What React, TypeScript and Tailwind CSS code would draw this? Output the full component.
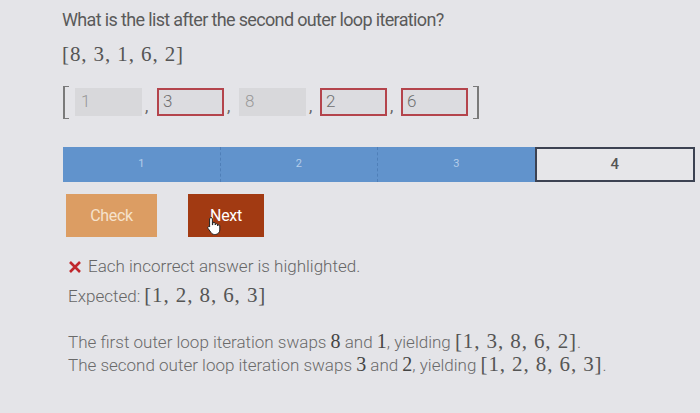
const sans = "font-[family-name:Roboto,sans-serif]";
const serif = "font-[family-name:'Liberation_Serif',serif]";
const mathList = serif + " text-[21px] text-[#555] tracking-[0.9px]";

function Box({ v, wrong }: { v: string; wrong?: boolean }) {
  return (
    <div
      className={
        "w-[67px] h-[28px] flex items-center pl-[4px] text-[17px] font-light " +
        (wrong
          ? "border-2 border-[#b4444c] bg-[#dcdce0] text-[#6e6e6e]"
          : "border-2 border-[#d8d8db] bg-[#d8d8db] text-[#999]")
      }
    >
      {v}
    </div>
  );
}

function Comma() {
  return <div className="w-[14px] h-[28px] flex items-end pl-[3px] pb-[1px] text-[17px] text-[#666] leading-none">,</div>;
}

function M({ children }: { children: React.ReactNode }) {
  return <span className={serif + " text-[20px] text-[#444]"}>{children}</span>;
}

export default function App() {
  return (
    <div className={"w-[700px] h-[413px] bg-[#e4e4e8] overflow-hidden pl-[62px] pt-[8px] " + sans}>
      <div className="text-[18px] text-[#5a5a5a] leading-[24px] tracking-[-0.65px]">
        What is the list after the second outer loop iteration?
      </div>
      <div className={mathList + " mt-[8px] leading-[28px]"}>[8, 3, 1, 6, 2]</div>

      <div className="mt-[18px] flex items-center h-[32px]">
        <div className="w-[6px] h-[33px] border-l-2 border-t border-b border-[#7a7a7a] ml-[1px]" />
        <div className="w-[6px]" />
        <Box v="1" />
        <Comma />
        <div className="w-[1px]" />
        <Box v="3" wrong />
        <Comma />
        <div className="w-[1px]" />
        <Box v="8" />
        <Comma />
        <Box v="2" wrong />
        <Comma />
        <Box v="6" wrong />
        <div className="w-[5px]" />
        <div className="w-[6px] h-[33px] border-r-2 border-t border-b border-[#7a7a7a]" />
      </div>

      <div className="mt-[29px] ml-[1px] flex w-[632px] h-[35px]">
        <div className="flex-1 bg-[#6193cc] flex items-center justify-center text-[11px] text-[#b4cdea] border-r border-dashed border-[#4f7fb8]">1</div>
        <div className="flex-1 bg-[#6193cc] flex items-center justify-center text-[11px] text-[#b4cdea] border-r border-dashed border-[#4f7fb8]">2</div>
        <div className="flex-1 bg-[#6193cc] flex items-center justify-center text-[11px] text-[#b4cdea]">3</div>
        <div className="flex-1 bg-[#e6e6e9] border-2 border-[#3c4252] flex items-center justify-center text-[15px] font-medium text-[#555]">4</div>
      </div>

      <div className="mt-[12px] ml-[4px] flex gap-[31px]">
        <div className="w-[91px] h-[43px] bg-[#dc9d63] flex items-center justify-center text-[16px] text-[#f6e2cc] tracking-[-0.3px]">Check</div>
        <div className="relative w-[76px] h-[43px] bg-[#a23a12] flex items-center justify-center text-[16px] text-white tracking-[-0.3px]">
          Next
          <svg className="absolute left-[19px] top-[22px]" width="14" height="20" viewBox="0 0 14 20">
            <path
              d="M4 1.5c.8 0 1.4.6 1.4 1.4V9l.3-.1V7.6c0-.7.6-1.2 1.3-1.2s1.2.5 1.2 1.2v1.3c0-.7.6-1.2 1.2-1.2.7 0 1.2.5 1.2 1.2v1c0-.6.5-1.1 1.1-1.1.6 0 1.1.5 1.1 1.1V14c0 2.5-2 4.5-4.5 4.5H7.5c-1.4 0-2.6-.7-3.4-1.8L1 12.4c-.4-.6-.3-1.3.3-1.7.5-.4 1.3-.3 1.7.3l-.4-.6V2.9C2.6 2.1 3.2 1.5 4 1.5z"
              fill="#fff"
              stroke="#222"
              strokeWidth="1"
            />
          </svg>
        </div>
      </div>

      <div className="mt-[20px] ml-[6px] flex items-center h-[20px] text-[17px] text-[#666] font-light">
        <svg width="14" height="14" viewBox="0 0 14 14" className="mr-[6px]">
          <path d="M2 2L12 12M12 2L2 12" stroke="#c0262c" strokeWidth="2.6" />
        </svg>
        Each incorrect answer is highlighted.
      </div>
      <div className="mt-[3px] ml-[6px] flex items-baseline text-[17px] text-[#666] font-light">
        <span className="mr-[4px]">Expected:</span>
        <span className={mathList}>[1, 2, 8, 6, 3]</span>
      </div>

      <div className="mt-[18px] ml-[6px] text-[17px] text-[#6a6a6a] font-light leading-[22px]">
        <div>
          The first outer loop iteration swaps <M>8</M> and <M>1</M>, yielding{" "}
          <span className={mathList}>[1, 3, 8, 6, 2]</span>.
        </div>
        <div>
          The second outer loop iteration swaps <M>3</M> and <M>2</M>, yielding{" "}
          <span className={mathList}>[1, 2, 8, 6, 3]</span>.
        </div>
      </div>
    </div>
  );
}
